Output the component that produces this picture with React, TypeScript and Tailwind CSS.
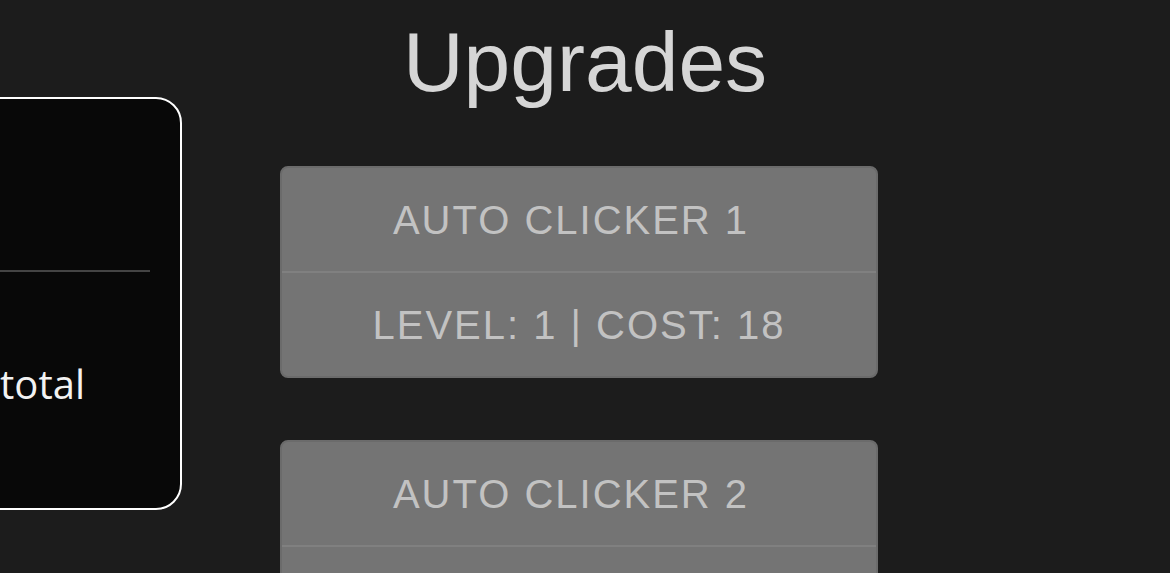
import React from 'react';

type Upgrade = {
  name: string;
  level: number;
  cost: number;
};

const upgrades: Upgrade[] = [
  { name: 'Auto Clicker 1', level: 1, cost: 18 },
  { name: 'Auto Clicker 2', level: 0, cost: 120 },
];

// Stats panel on the left, only partly on screen
const StatsPanel: React.FC = () => (
  <div className="shrink-0 w-[400px] -ml-[218px] mt-[97px] h-[413px] rounded-[26px] border-2 border-white bg-[#080808] px-[30px] pt-[171px] overflow-hidden">
    <div className="h-[2px] bg-[#444444]" />
    <p className="mt-[82px] pr-[65px] text-right whitespace-nowrap text-[40px] text-[#f2f2f2] font-['Open_Sans',sans-serif]">
      clicks in total
    </p>
  </div>
);

const UpgradeCard: React.FC<{ upgrade: Upgrade }> = ({ upgrade }) => (
  <button className="w-[598px] h-[212px] shrink-0 flex flex-col rounded-lg border-2 border-[#6b6b6b] bg-[#747474] text-[#c2c2c2] text-[40px] uppercase tracking-[2px] font-['Liberation_Sans',Arial,sans-serif]">
    <span className="flex-1 flex items-center justify-center pr-[16px] border-b-2 border-[#808080]">
      {upgrade.name}
    </span>
    <span className="flex-1 flex items-center justify-center">
      Level: {upgrade.level} | Cost: {upgrade.cost}
    </span>
  </button>
);

export default function App() {
  return (
    <div className="h-screen w-full overflow-hidden bg-[#1c1c1c] grid grid-cols-[182px_1fr_182px]">
      <div className="flex">
        <StatsPanel />
      </div>
      <main className="flex flex-col">
        <h1 className="mt-[20px] text-center text-[84px] leading-none text-[#d6d6d6] font-['Liberation_Sans',Arial,sans-serif]">
          Upgrades
        </h1>
        <div className="mt-[62px] ml-[98px] flex flex-col gap-[62px]">
          {upgrades.map((u) => (
            <UpgradeCard key={u.name} upgrade={u} />
          ))}
        </div>
      </main>
      <div />
    </div>
  );
}
